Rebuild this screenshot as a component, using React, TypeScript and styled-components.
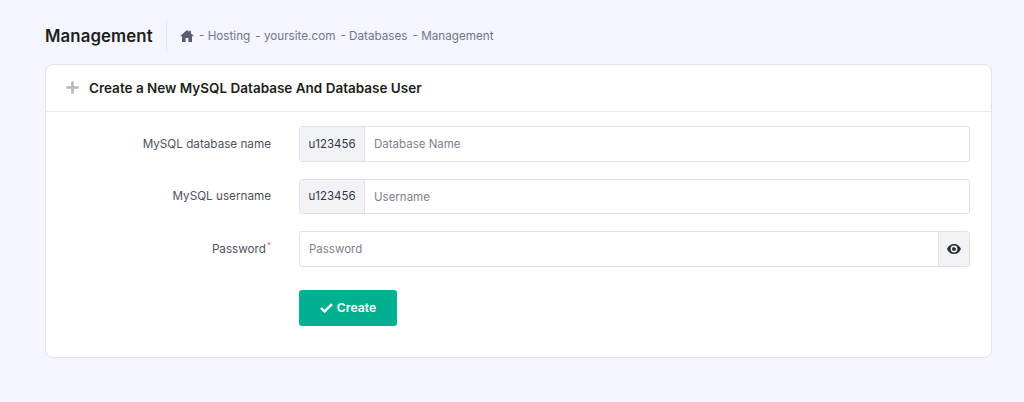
import React from "react";
import styled, { createGlobalStyle } from "styled-components";

const Global = createGlobalStyle`
  html, body { margin: 0; padding: 0; background: #f4f5ff; }
  body { font-family: "Inter", "Liberation Sans", sans-serif; }
  * { box-sizing: border-box; }
`;
const Page = styled.div`
  width: 1024px; height: 402px; padding: 20px 32px 0 45px; overflow: hidden;
`;
const TopBar = styled.div`
  display: flex; align-items: center; height: 31px; margin-bottom: 12.5px;
`;
const Title = styled.h1`
  margin: 0; font-size: 16.8px; font-weight: 600; color: #1d1e20; padding-right: 12px; line-height: 30px;
  border-right: 1px solid #e3e4ee; width: 122px; white-space: nowrap; letter-spacing: 0.1px;
`;
const Crumbs = styled.nav`
  display: flex; align-items: center; margin-left: 13px; font-size: 11.7px; color: #727586;
`;
const Crumb = styled.span<{ $gap: number }>`
  margin-left: ${(p) => p.$gap}px; white-space: nowrap;
`;
const Card = styled.section`
  background: #fff; border: 1px solid #e1e2ec; border-radius: 8px; height: 294px;
`;
const CardHead = styled.header`
  display: flex; align-items: center; gap: 10px; height: 47px; padding-left: 20px;
  border-bottom: 1px solid #e8e9ef;
`;
const CardTitle = styled.h2`
  margin: 0; font-size: 13.5px; font-weight: 600; color: #1d1e20; white-space: nowrap;
`;
const Form = styled.form`
  display: flex; flex-direction: column; gap: 17px; padding: 14.5px 21px 0 0;
`;
const Row = styled.div`
  display: flex; align-items: center; height: 35.5px;
`;
const Label = styled.label`
  width: 225px; text-align: right; font-size: 11.7px; color: #4f5263; white-space: nowrap;
`;
const Req = styled.sup`
  color: #fc5185; font-size: 8px; line-height: 0; margin-left: 1px;
`;
const Group = styled.div`
  flex: 1; display: flex; height: 100%; margin-left: 28px; background: #fff;
  border: 1px solid #e0e1e7; border-radius: 3px; overflow: hidden;
`;
const Prefix = styled.span`
  display: flex; align-items: center; justify-content: center; width: 65px;
  background: #f2f3f6; border-right: 1px solid #e0e1e7; font-size: 11.5px; color: #36344d;
`;
const Field = styled.input`
  flex: 1; min-width: 0; border: 0; outline: 0; padding: 1px 9px 0; background: transparent;
  font-family: inherit; font-size: 11.5px; color: #36344d;
  &::placeholder { color: #7f8291; opacity: 1; }
`;
const EyeBox = styled.span`
  display: flex; align-items: center; justify-content: center; width: 31px;
  background: #f2f3f6; border-left: 1px solid #e0e1e7;
`;
const Actions = styled.div`
  margin: 6px 0 0 253px;
`;
const Submit = styled.button`
  display: flex; align-items: center; justify-content: center; gap: 4px; width: 98px; height: 36px;
  border: 0; border-radius: 3px; background: #00b090; color: #fff;
  font-family: inherit; font-size: 12.2px; font-weight: 600;
`;

const App = () => (
  <Page>
    <Global />
    <TopBar>
      <Title>Management</Title>
      <Crumbs>
        <svg width="14" height="12" viewBox="0 0 14 12" aria-hidden="true">
          <path fill="#595c6b" d="M7 0 L9.2 2 V.8 H11 V3.6 L14 6.3 H12 V12 H8.4 V8 H5.6 V12 H2 V6.3 H0 Z" />
        </svg>
        <Crumb $gap={5}>- Hosting</Crumb>
        <Crumb $gap={5}>- yoursite.com</Crumb>
        <Crumb $gap={5}>- Databases</Crumb>
        <Crumb $gap={5}>- Management</Crumb>
      </Crumbs>
    </TopBar>
    <Card>
      <CardHead>
        <svg width="13" height="13" viewBox="0 0 13 13" aria-hidden="true">
          <path stroke="#b5b7c6" strokeWidth="2.6" d="M6.5 .5 V12.5 M.5 6.5 H12.5" />
        </svg>
        <CardTitle>Create a New MySQL Database And Database User</CardTitle>
      </CardHead>
      <Form>
        <Row>
          <Label>MySQL database name</Label>
          <Group>
            <Prefix>u123456</Prefix>
            <Field placeholder="Database Name" />
          </Group>
        </Row>
        <Row>
          <Label>MySQL username</Label>
          <Group>
            <Prefix>u123456</Prefix>
            <Field placeholder="Username" />
          </Group>
        </Row>
        <Row>
          <Label>Password<Req>*</Req></Label>
          <Group>
            <Field placeholder="Password" />
            <EyeBox>
              <svg width="14" height="10" viewBox="0 0 14 10" aria-hidden="true">
                <path fill="#2b2c33" fillRule="evenodd" d="M7 0C3.8 0 1.2 2 0 5c1.2 3 3.8 5 7 5s5.8-2 7-5c-1.2-3-3.8-5-7-5Zm0 1.6a3.4 3.4 0 1 1 0 6.8 3.4 3.4 0 0 1 0-6.8Zm0 1.4a2 2 0 1 0 2 2c0-.3 0-.5-.2-.7a1 1 0 0 1-1.2-1.2A2 2 0 0 0 7 3Z" />
              </svg>
            </EyeBox>
          </Group>
        </Row>
        <Actions>
          <Submit type="button">
            <svg width="13" height="10" viewBox="0 0 13 10" aria-hidden="true">
              <path fill="none" stroke="#fff" strokeWidth="2.4" d="M1 5 L4.6 8.4 L12 1.2" />
            </svg>
            Create
          </Submit>
        </Actions>
      </Form>
    </Card>
  </Page>
);

export default App;
